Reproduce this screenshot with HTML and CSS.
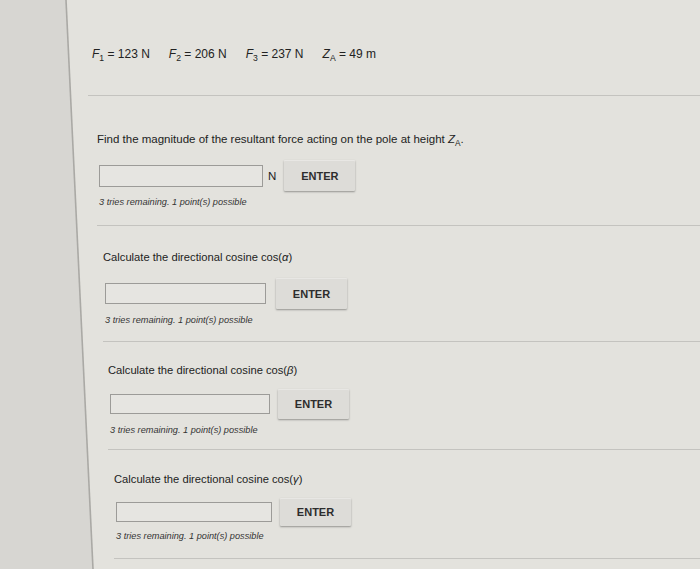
FILE: index.html
```html
<!DOCTYPE html>
<html lang="en">
<head>
  <meta charset="UTF-8" />
  <meta name="viewport" content="width=device-width, initial-scale=1.0"/>
  <title>Resultant force</title>
  <link rel="stylesheet" href="styles.css">
</head>
<body>
  <div class="sheet">
    <div class="givens">
      <span class="given"><i>F</i><sub>1</sub> = 123 N</span>
      <span class="given"><i>F</i><sub>2</sub> = 206 N</span>
      <span class="given"><i>F</i><sub>3</sub> = 237 N</span>
      <span class="given"><i>Z</i><sub>A</sub> = 49 m</span>
    </div>

    <div class="question q1">
      <p class="prompt">Find the magnitude of the resultant force acting on the pole at height <i>Z</i><sub>A</sub>.</p>
      <div class="answer">
        <input type="text" class="field">
        <span class="unit">N</span>
        <button class="enter">ENTER</button>
      </div>
      <p class="tries">3 tries remaining. 1 point(s) possible</p>
    </div>

    <div class="question q2">
      <p class="prompt">Calculate the directional cosine cos(<i>α</i>)</p>
      <div class="answer">
        <input type="text" class="field">
        <button class="enter">ENTER</button>
      </div>
      <p class="tries">3 tries remaining. 1 point(s) possible</p>
    </div>

    <div class="question q3">
      <p class="prompt">Calculate the directional cosine cos(<i>β</i>)</p>
      <div class="answer">
        <input type="text" class="field">
        <button class="enter">ENTER</button>
      </div>
      <p class="tries">3 tries remaining. 1 point(s) possible</p>
    </div>

    <div class="question q4">
      <p class="prompt">Calculate the directional cosine cos(<i>γ</i>)</p>
      <div class="answer">
        <input type="text" class="field">
        <button class="enter">ENTER</button>
      </div>
      <p class="tries">3 tries remaining. 1 point(s) possible</p>
    </div>
  </div>
</body>
</html>
```

FILE: styles.css
```css
body {
  margin: 0;
  width: 700px;
  height: 569px;
  overflow: hidden;
  font-family: "Liberation Sans", Arial, sans-serif;
  color: #222;
  background-color: #e3e2dd;
  background-image: url("data:image/svg+xml,%3Csvg xmlns='http://www.w3.org/2000/svg' viewBox='0 0 700 569' preserveAspectRatio='none'%3E%3Cpolygon points='0,0 66,0 93,569 0,569' fill='%23d7d6d2'/%3E%3Cline x1='66' y1='0' x2='93' y2='569' stroke='%23aaa9a5' stroke-width='1.6'/%3E%3C/svg%3E");
  background-size: 100% 100%;
}
.sheet {
  margin-left: 88px;
}
.givens {
  padding: 47px 0 34px 4px;
  height: 14px;
  font-size: 12px;
  line-height: 14px;
  border-bottom: 1px solid #c4c3bf;
  display: flex;
  gap: 19px;
}
sub {
  font-size: 0.72em;
  line-height: 0;
}
.question {
  border-bottom: 1px solid #c4c3bf;
  padding: var(--top) 0 var(--bottom) 0;
  margin-left: var(--indent);
}
.prompt {
  margin: 0;
  font-size: 11.5px;
  line-height: 16px;
}
.q2 .prompt,
.q3 .prompt,
.q4 .prompt {
  font-size: 11.2px;
}
.answer {
  display: flex;
  align-items: center;
  margin-top: var(--gap);
  height: var(--btn-h);
}
.field {
  box-sizing: border-box;
  width: var(--field-w);
  height: var(--field-h);
  margin: 0 0 0 2px;
  padding: 0;
  border: 1px solid #9c9b98;
  background: #e6e5e1;
}
.unit {
  font-size: 11.5px;
  margin: 0 8px 0 5px;
}
.enter {
  box-sizing: border-box;
  width: 71px;
  height: var(--btn-h);
  margin-left: var(--btn-gap);
  border: none;
  border-radius: 1px;
  background: #dddcd8;
  box-shadow: 0 1px 2px rgba(0, 0, 0, 0.35), inset 0 1px 0 #e8e7e4;
  font-family: "Liberation Sans", Arial, sans-serif;
  font-size: 11px;
  font-weight: bold;
  color: #2d2d2d;
}
.tries {
  margin: 6px 0 0 2px;
  font-size: 9.2px;
  line-height: 11px;
  font-style: italic;
  color: #333;
}
.q1 {
  --indent: 9px;
  --top: 35px;
  --bottom: 17px;
  --gap: 13px;
  --field-w: 164px;
  --field-h: 22px;
  --btn-h: 31px;
  --btn-gap: 0;
}
.q2 {
  --indent: 15px;
  --top: 23px;
  --bottom: 15px;
  --gap: 13px;
  --field-w: 161px;
  --field-h: 21px;
  --btn-h: 31px;
  --btn-gap: 10px;
}
.q3 {
  --indent: 20px;
  --top: 20px;
  --bottom: 13px;
  --gap: 11px;
  --field-w: 160px;
  --field-h: 20px;
  --btn-h: 30px;
  --btn-gap: 8px;
}
.q4 {
  --indent: 26px;
  --top: 21px;
  --bottom: 16px;
  --gap: 11px;
  --field-w: 156px;
  --field-h: 20px;
  --btn-h: 28px;
  --btn-gap: 8px;
}
.q4 .tries {
  margin-top: 5px;
}
```
